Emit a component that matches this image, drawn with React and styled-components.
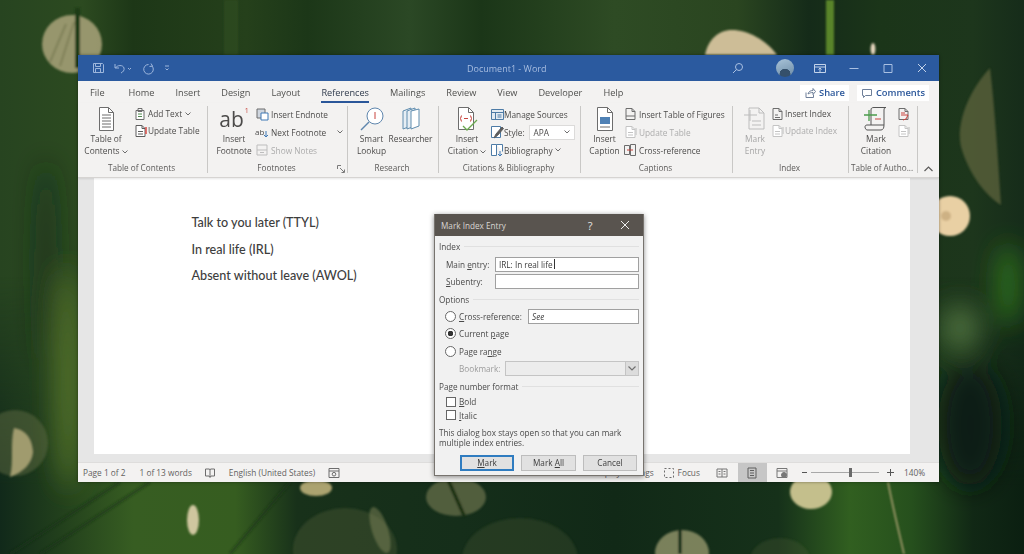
import React from 'react'
import styled, { createGlobalStyle } from 'styled-components'

const GlobalStyle = createGlobalStyle`
  html, body {
    margin: 0;
    padding: 0;
    width: 1024px;
    height: 554px;
    overflow: hidden;
    background: #12301a;
    font-family: "Open Sans", "Noto Sans", sans-serif;
  }
`

const Desktop = styled.div`
  position: relative;
  width: 1024px;
  height: 554px;
  overflow: hidden;
  filter: blur(0.35px);
`

const WallpaperSvg = styled.svg`
  position: absolute;
  inset: 0;
`

const Window = styled.div`
  position: absolute;
  left: 78px;
  top: 55px;
  width: 861px;
  height: 427px;
  display: flex;
  flex-direction: column;
  background: #f3f2f1;
  box-shadow: 0 0 3px rgba(0, 0, 0, 0.4);
`

const TitleBar = styled.div`
  position: relative;
  height: 26px;
  flex: none;
  display: flex;
  align-items: center;
  background: #2b5a9f;
  color: #fff;
`

const QuickAccess = styled.div`
  display: flex;
  align-items: center;
  gap: 8px;
  padding-left: 13px;
  color: #9db6dc;
`

const DocTitle = styled.div`
  position: absolute;
  left: 389px;
  font-size: 9px;
  color: #a7bde0;
`

const WindowControls = styled.div`
  margin-left: auto;
  display: flex;
  align-items: center;
  color: #a9c0e2;
`

const ControlSlot = styled.div`
  width: ${p => p.$w || 34}px;
  display: flex;
  justify-content: center;
  align-items: center;
`

const Avatar = styled.div`
  width: 18px;
  height: 18px;
  border-radius: 50%;
  background: radial-gradient(circle at 50% 85%, #35506b 0 30%, transparent 32%), linear-gradient(160deg, #a9c3d8, #6b8ba6);
`

const TabRow = styled.div`
  height: 22px;
  flex: none;
  display: flex;
  align-items: center;
  gap: 21px;
  padding: 1px 10px 0 12px;
  box-sizing: border-box;
`

const Tab = styled.div`
  position: relative;
  font-size: 9.2px;
  line-height: 21px;
  color: ${p => (p.$active ? '#2f3a4c' : '#50504e')};
  &:first-child {
    margin-right: 3px;
  }
  &::after {
    content: '';
    display: ${p => (p.$active ? 'block' : 'none')};
    position: absolute;
    left: 0;
    right: 0;
    bottom: 0;
    height: 2px;
    background: #2b579a;
  }
`

const TabActions = styled.div`
  margin-left: auto;
  display: flex;
  gap: 8px;
`

const TabAction = styled.div`
  height: 16px;
  width: ${p => p.$w}px;
  display: flex;
  align-items: center;
  justify-content: center;
  gap: 3px;
  background: #fff;
  color: #2b579a;
  font-size: 9.4px;
  font-weight: 600;
`

const Ribbon = styled.div`
  height: 74px;
  flex: none;
  display: flex;
  background: #f3f2f1;
  border-bottom: 1px solid #d6d4d2;
  box-shadow: 0 1px 2px rgba(0, 0, 0, 0.1);
  z-index: 1;
`

const RibbonGroup = styled.div`
  position: relative;
  width: ${p => p.$w}px;
  flex: none;
  display: flex;
  flex-direction: column;
  &::after {
    content: '';
    position: absolute;
    right: 0;
    top: 3px;
    bottom: 4px;
    width: 1px;
    background: #c9c8c6;
  }
`

const GroupBody = styled.div`
  height: 58px;
  display: flex;
  padding-left: ${p => p.$pad}px;
  gap: ${p => p.$gap ?? 4}px;
`

const GroupLabel = styled.div`
  height: 13px;
  line-height: 13px;
  text-align: center;
  font-size: 8.2px;
  color: #5c5b5a;
  white-space: nowrap;
  padding-right: 3px;
`

const DialogLauncher = styled.svg`
  position: absolute;
  right: 3px;
  bottom: 4px;
`

const CollapseSlot = styled.div`
  flex: 1;
  display: flex;
  align-items: flex-end;
  justify-content: center;
  padding-bottom: 5px;
  color: #5c5b5a;
`

const BigButton = styled.div`
  width: ${p => p.$w}px;
  flex: none;
  display: flex;
  flex-direction: column;
  align-items: center;
  padding-top: 3px;
  font-size: 8.4px;
  line-height: 12px;
  text-align: center;
  white-space: nowrap;
  color: ${p => (p.$off ? '#a6a6a6' : '#4c4b4a')};
`

const BigIcon = styled.div`
  height: 26px;
  margin-bottom: 1px;
  display: flex;
  align-items: center;
  justify-content: center;
`

const AbMark = styled.span`
  font-size: 21px;
  line-height: 26px;
  color: #4c4b4a;
`

const AbSup = styled.span`
  align-self: flex-start;
  margin-left: 1px;
  font-size: 7px;
  line-height: 9px;
  color: #c8453f;
`

const SmallStack = styled.div`
  display: flex;
  flex-direction: column;
  padding-top: 2px;
`

const SmallRow = styled.div`
  height: ${p => p.$h || 18}px;
  display: flex;
  align-items: center;
  gap: ${p => p.$gap ?? 2}px;
  font-size: 8.3px;
  white-space: nowrap;
  color: ${p => (p.$off ? '#acacac' : '#4c4b4a')};
`

const StyleCombo = styled.div`
  width: 46px;
  height: 15px;
  margin-left: 4px;
  display: flex;
  align-items: center;
  justify-content: space-between;
  padding: 0 4px;
  box-sizing: border-box;
  background: #fff;
  border: 1px solid #dcdbda;
`

const DocArea = styled.div`
  flex: 1;
  display: flex;
  justify-content: center;
  background: #e6e6e6;
  overflow: hidden;
`

const Page = styled.div`
  width: 816px;
  margin-right: 14px;
  height: 276px;
  padding: 32px 0 0 98px;
  box-sizing: border-box;
  background: #fff;
  font-family: Lato, "Open Sans", sans-serif;
  font-size: 12.6px;
  font-weight: 500;
  color: #3d3d3d;
`

const Para = styled.div`
  height: 26.5px;
  line-height: 26.5px;
`

const StatusBar = styled.div`
  height: 20px;
  flex: none;
  display: flex;
  align-items: center;
  padding-left: 5px;
  font-size: 8.3px;
  color: #62615f;
  background: #f3f2f1;
  white-space: nowrap;
  border-top: 1px solid #dedddc;
  box-sizing: border-box;
`

const StatusItem = styled.div`
  margin-left: ${p => p.$ml || 0}px;
  display: flex;
  align-items: center;
  gap: 3px;
`

const StatusRight = styled.div`
  margin-left: auto;
  height: 100%;
  display: flex;
  align-items: center;
  padding-right: 14px;
`

const ViewCell = styled.div`
  width: 29px;
  height: 100%;
  margin-left: ${p => p.$ml || 0}px;
  display: flex;
  align-items: center;
  justify-content: center;
  background: ${p => (p.$active ? '#c6c6c6' : 'transparent')};
`

const ZoomTrack = styled.div`
  position: relative;
  width: 68px;
  height: 1px;
  margin: 0 8px 0 3px;
  background: #a8a8a8;
`

const ZoomKnob = styled.div`
  position: absolute;
  left: 38px;
  top: -4px;
  width: 3px;
  height: 9px;
  background: #6a6a6a;
`

const Dialog = styled.div`
  position: absolute;
  left: 434px;
  top: 214px;
  width: 210px;
  height: 262px;
  display: flex;
  flex-direction: column;
  background: #f1f1f1;
  border: 1px solid #77736e;
  border-top: 0;
  box-sizing: border-box;
  box-shadow: 0 1px 5px rgba(0, 0, 0, 0.45);
  font-size: 8.2px;
  color: #4a4a4a;
`

const DialogTitle = styled.div`
  height: 22px;
  flex: none;
  display: flex;
  align-items: center;
  padding-left: 6px;
  background: #59544f;
  color: #d8d5d2;
  font-size: 8.2px;
`

const DialogTitleBtn = styled.div`
  width: ${p => p.$w}px;
  display: flex;
  justify-content: center;
  font-size: 11px;
  margin-left: ${p => (p.$auto ? 'auto' : '0')};
  color: #e6e4e2;
`

const DialogBody = styled.div`
  display: flex;
  flex-direction: column;
  padding: 0 4px;
  flex: 1;
`

const SectionHead = styled.div`
  height: ${p => p.$h}px;
  margin-top: ${p => p.$mt || 0}px;
  display: flex;
  align-items: center;
  gap: 4px;
  white-space: nowrap;
  &::after {
    content: '';
    flex: 1;
    height: 1px;
    background: #e0e0e0;
  }
`

const FormRow = styled.div`
  height: ${p => p.$h || 15}px;
  margin-top: ${p => p.$mt || 0}px;
  padding-left: ${p => p.$pl || 0}px;
  display: flex;
  align-items: center;
  white-space: nowrap;
  color: ${p => (p.$off ? '#9c9c9c' : 'inherit')};
`

const FieldLabel = styled.div`
  width: ${p => p.$w}px;
  flex: none;
`

const TextField = styled.div`
  flex: 1;
  height: 100%;
  padding: 0 3px;
  box-sizing: border-box;
  line-height: 13px;
  background: #fff;
  border: 1px solid #a0a0a0;
  font-style: ${p => (p.$italic ? 'italic' : 'normal')};
  color: #3c3c3c;
`

const Caret = styled.span`
  display: inline-block;
  width: 1px;
  height: 10px;
  margin-left: 1px;
  vertical-align: -1px;
  background: #333;
`

const SelectField = styled.div`
  flex: 1;
  height: 100%;
  display: flex;
  justify-content: flex-end;
  box-sizing: border-box;
  background: #ececec;
  border: 1px solid #c4c4c4;
`

const SelectArrow = styled.div`
  width: 12px;
  display: flex;
  align-items: center;
  justify-content: center;
  background: #dcdcdc;
  border-left: 1px solid #c4c4c4;
  color: #707070;
`

const Radio = styled.span`
  width: 11px;
  height: 11px;
  margin-right: 3px;
  flex: none;
  box-sizing: border-box;
  border-radius: 50%;
  background: ${p => (p.$on ? 'radial-gradient(circle, #333 0 2.6px, #fff 3px)' : '#fff')};
  border: 1px solid #666;
`

const CheckBox = styled.span`
  width: 10px;
  height: 10px;
  margin-right: 3px;
  flex: none;
  box-sizing: border-box;
  background: #fff;
  border: 1px solid #666;
`

const Note = styled.div`
  margin-top: 6px;
  line-height: 10px;
`

const ButtonRow = styled.div`
  margin-top: 7px;
  padding-left: 21px;
  display: flex;
  gap: 7px;
`

const DlgButton = styled.div`
  width: ${p => p.$w}px;
  height: 16px;
  line-height: 14px;
  text-align: center;
  box-sizing: border-box;
  background: #e1e1e1;
  border: 1px solid ${p => (p.$primary ? '#2f7cc0' : '#bdbdbd')};
  box-shadow: ${p => (p.$primary ? 'inset 0 0 0 1px #2f7cc0' : 'none')};
  color: #3c3c3c;
`

const Glyph = ({ w = 14, h = 14, children, stroke = '#6d6d6d', ...rest }) => (
  <svg width={w} height={h} viewBox={`0 0 ${w} ${h}`} fill="none" stroke={stroke} strokeWidth="1" {...rest}>
    {children}
  </svg>
)

const Chevron = ({ color = '#6d6d6d' }) => (
  <svg width="6" height="4" viewBox="0 0 6 4" fill="none" stroke={color} strokeWidth="1" style={{ marginLeft: 2 }}>
    <path d="M.5.5 3 3 5.5.5" />
  </svg>
)

const SmallDoc = ({ stroke = '#5c5c5c', mark }) => (
  <Glyph stroke={stroke}>
    <path d="M3 1.500h6l3 3v8H3z" fill="#fff" />
    <path d="M9 1.500v3h3M5 7.500h5M5 10h5" />
    {mark && <path d="M13 3v7" stroke={mark} strokeWidth="1.600" />}
  </Glyph>
)

const Wallpaper = () => (
  <WallpaperSvg width="1024" height="554" viewBox="0 0 1024 554">
    <defs>
      <linearGradient id="top" x1="0" x2="1" y1="0" y2="0">
        <stop offset="0" stopColor="#274420" />
        <stop offset=".08" stopColor="#2c4a20" />
        <stop offset=".13" stopColor="#1d3717" />
        <stop offset=".24" stopColor="#25401b" />
        <stop offset=".3" stopColor="#1c3718" />
        <stop offset=".4" stopColor="#2b4825" />
        <stop offset=".47" stopColor="#1b3618" />
        <stop offset=".6" stopColor="#2e4b24" />
        <stop offset=".72" stopColor="#2a4520" />
        <stop offset=".79" stopColor="#152b19" />
        <stop offset=".86" stopColor="#1b3519" />
        <stop offset=".95" stopColor="#1d361c" />
        <stop offset="1" stopColor="#162c1a" />
      </linearGradient>
      <linearGradient id="bottom" x1="0" x2="1" y1="0" y2="0">
        <stop offset="0" stopColor="#11291a" />
        <stop offset=".06" stopColor="#22401c" />
        <stop offset=".13" stopColor="#375d22" />
        <stop offset=".23" stopColor="#365d20" />
        <stop offset=".29" stopColor="#18311a" />
        <stop offset=".45" stopColor="#152e1a" />
        <stop offset=".6" stopColor="#112917" />
        <stop offset=".76" stopColor="#16311a" />
        <stop offset=".83" stopColor="#315f20" />
        <stop offset=".89" stopColor="#26501d" />
        <stop offset=".95" stopColor="#112815" />
        <stop offset="1" stopColor="#0b1f11" />
      </linearGradient>
      <linearGradient id="fade" x1="0" x2="0" y1="0" y2="1">
        <stop offset=".5" stopColor="#fff" stopOpacity="0" />
        <stop offset=".88" stopColor="#fff" stopOpacity="1" />
      </linearGradient>
      <mask id="fadeMask">
        <rect width="1024" height="554" fill="url(#fade)" />
      </mask>
      <filter id="soft" x="-20%" y="-20%" width="140%" height="140%"><feGaussianBlur stdDeviation="13" /></filter>
      <filter id="soft2" x="-5%" y="-5%" width="110%" height="110%"><feGaussianBlur stdDeviation="1.300" /></filter>
    </defs>
    <rect width="1024" height="554" fill="url(#top)" />
    <rect width="1024" height="554" fill="url(#bottom)" mask="url(#fadeMask)" />
    <g filter="url(#soft)">
      <ellipse cx="68" cy="380" rx="12" ry="110" fill="#56752a" />
      <ellipse cx="46" cy="260" rx="6" ry="100" fill="#12291a" />
      <ellipse cx="1008" cy="285" rx="10" ry="42" fill="#327d1e" />
      <ellipse cx="960" cy="328" rx="20" ry="24" fill="#4a6a3a" />
      <ellipse cx="970" cy="425" rx="32" ry="62" fill="#0a1f13" />
    </g>
    <g filter="url(#soft2)">
      <rect x="826" y="0" width="8" height="55" fill="#64932d" opacity=".85" />
      <rect x="224" y="0" width="14" height="55" fill="#3a5a23" opacity=".4" />
      <ellipse cx="72" cy="44" rx="30" ry="29" fill="#a39e76" opacity=".9" />
      <rect x="75" y="8" width="5" height="60" fill="#1e3a16" />
      <path d="M60 66 74 22M50 62 66 24" stroke="#7f8058" strokeWidth="2" />
      <path d="M705 55c3-15 13-25 27-25 16 0 34 10 45 25z" fill="#cdbd97" />
      <ellipse cx="873" cy="49" rx="2.400" ry="6" fill="#e8d8c0" />
      <path d="M990 68C965 95 955 130 962 150c8 25 23 45 39 55-3-45-6-95-11-137z" fill="#62663f" opacity=".7" />
      <circle cx="950" cy="216" r="20" fill="#e9d0a4" />
      <circle cx="946" cy="216" r="5" fill="#cdb184" />
      <ellipse cx="811" cy="492" rx="21" ry="17" fill="#c4bf8c" />
      <ellipse cx="316" cy="488" rx="16" ry="8" fill="#aba370" />
      <ellipse cx="456" cy="497" rx="30" ry="19" fill="#7a7f57" opacity=".6" />
      <rect x="446" y="480" width="4" height="40" fill="#1a3316" transform="rotate(-24 446 480)" />
      <ellipse cx="193" cy="520" rx="6" ry="15" fill="#cfc69f" />
      <ellipse cx="345" cy="550" rx="52" ry="42" fill="#5f6a42" opacity=".3" />
      <ellipse cx="380" cy="530" rx="8" ry="24" fill="#8b8e60" opacity=".45" transform="rotate(-18 380 530)" />
      <ellipse cx="520" cy="560" rx="58" ry="42" fill="#556238" opacity=".25" />
      <ellipse cx="682" cy="553" rx="27" ry="23" fill="#9d9d72" opacity=".75" />
      <rect x="678" y="530" width="4" height="24" fill="#15301a" />
      <ellipse cx="780" cy="560" rx="30" ry="22" fill="#556238" opacity=".25" />
      <circle cx="15" cy="443" r="33" fill="#5d6a42" opacity=".5" />
      <path d="M14 428c10 2 18 8 19 24-1 12-10 20-23 25 4-16 0-33 4-49z" fill="#a09b6e" />
      <path d="M888 482c4 22 11 50 16 72" stroke="#b7a87a" strokeWidth="1.400" fill="none" />
      <path d="M150 482 40 554M120 482 10 554M290 482 230 554" stroke="#1a3518" strokeWidth="3" opacity=".5" />
    </g>
  </WallpaperSvg>
)

const Tabs = ['File', 'Home', 'Insert', 'Design', 'Layout', 'References', 'Mailings', 'Review', 'View', 'Developer', 'Help']

const WordWindow = () => (
  <Window>
    <TitleBar>
      <QuickAccess>
        <Glyph stroke="#9db6dc"><path d="M2.500 2.500h9l1 1v8h-10zM4.500 2.500v3h5v-3M4.500 11.500v-4h5v4" /></Glyph>
        <Glyph stroke="#9db6dc" w={20}><path d="M2 3v4h4M2.500 7C4 4 10 3.500 11 7c.6 2.200-1 4-3 5" /><path d="M15 7l1.500 1.500L18 7" /></Glyph>
        <Glyph stroke="#9db6dc"><path d="M10 2.500l1.500 2.600-3 .4M11 5a4.800 4.800 0 1 1-3.500-1.500" /></Glyph>
        <Glyph stroke="#9db6dc" w={8}><path d="M2 5h4M2.500 7.500 4 9l1.500-1.500" /></Glyph>
      </QuickAccess>
      <DocTitle>Document1 - Word</DocTitle>
      <WindowControls>
        <ControlSlot $w={58}>
          <Glyph stroke="#a9c0e2"><circle cx="8" cy="6" r="3.500" /><path d="M5.500 8.500 2 12" /></Glyph>
        </ControlSlot>
        <ControlSlot $w={36}><Avatar /></ControlSlot>
        <ControlSlot><Glyph stroke="#c3d3ea"><path d="M1.500 3.500h11v8h-11zM1.500 6h11M7 11V7M5.500 8.500 7 7l1.500 1.500" /></Glyph></ControlSlot>
        <ControlSlot><Glyph stroke="#a9c0e2"><path d="M2.500 7.500h9" /></Glyph></ControlSlot>
        <ControlSlot><Glyph stroke="#a9c0e2"><path d="M3 3.500h8v8H3z" /></Glyph></ControlSlot>
        <ControlSlot><Glyph stroke="#c3d3ea"><path d="M3 3l8 8M11 3l-8 8" /></Glyph></ControlSlot>
      </WindowControls>
    </TitleBar>

    <TabRow>
      {Tabs.map(t => <Tab key={t} $active={t === 'References'}>{t}</Tab>)}
      <TabActions>
        <TabAction $w={49}>
          <Glyph w={12} h={12} stroke="#6e7f99"><path d="M2 5.500v5h7.500v-3M4 7c.5-2.500 2.500-3.500 5-3.500V1.500l2.500 3-2.500 3V5.500C7 5.500 5.500 6 4 7z" /></Glyph>
          Share
        </TabAction>
        <TabAction $w={72}>
          <Glyph w={12} h={12} stroke="#6e7f99"><path d="M1.500 2.500h9v6h-6l-2 2v-2h-1z" /></Glyph>
          Comments
        </TabAction>
      </TabActions>
    </TabRow>

    <Ribbon>
      <RibbonGroup $w={130}>
        <GroupBody $pad={6} $gap={5}>
          <BigButton $w={44}>
            <BigIcon>
              <Glyph w={20} h={26}><path d="M3.500 1.500h9l5 5v18h-14z" fill="#fff" /><path d="M12.500 1.500v5h5M6 9h9M6 12h9M6 15h9M6 18h9M6 21h9" /></Glyph>
            </BigIcon>
            Table of
            <span>Contents<Chevron /></span>
          </BigButton>
          <SmallStack>
            <SmallRow $gap={1} $h={17}><Glyph><path d="M3 3.500h8v9H3zM5 1.500h4v3H5z" fill="#fff" /><path d="M5 7h4M5 9.500h4" stroke="#4f8a4f" /></Glyph>Add Text<Chevron /></SmallRow>
            <SmallRow $gap={1} $h={17}><SmallDoc mark="#d9534f" />Update Table</SmallRow>
          </SmallStack>
        </GroupBody>
        <GroupLabel>Table of Contents</GroupLabel>
      </RibbonGroup>

      <RibbonGroup $w={140}>
        <GroupBody $pad={8} $gap={3}>
          <BigButton $w={36}>
            <BigIcon>
              <AbMark>ab</AbMark>
              <AbSup>1</AbSup>
            </BigIcon>
            Insert
            <span>Footnote</span>
          </BigButton>
          <SmallStack>
            <SmallRow><Glyph><path d="M2 2h8v9H2z" fill="#cfd6df" /><path d="M6 6h7v7H6z" fill="#fff" stroke="#3f79b5" /></Glyph>Insert Endnote</SmallRow>
            <SmallRow>
              <svg width="14" height="14" viewBox="0 0 14 14">
                <text x="0" y="10" fontFamily="Open Sans, sans-serif" fontSize="8" fill="#4c4b4a">ab</text>
                <path d="M11 6v6M9 10l2 2 2-2" stroke="#3f79b5" fill="none" />
              </svg>
              Next Footnote<span style={{ width: 5 }} /><Chevron />
            </SmallRow>
            <SmallRow $off><Glyph stroke="#bdbdbd"><path d="M2 2h10v10H2zM2 7h10M5 9.500h4" /></Glyph>Show Notes</SmallRow>
          </SmallStack>
        </GroupBody>
        <GroupLabel>Footnotes</GroupLabel>
        <DialogLauncher width="8" height="8" viewBox="0 0 8 8" fill="none" stroke="#7a7a7a">
          <path d="M.5 4V.5H4M3 3l4 4M4.500 7.500h3v-3" />
        </DialogLauncher>
      </RibbonGroup>

      <RibbonGroup $w={91}>
        <GroupBody $pad={9} $gap={5}>
          <BigButton $w={29}>
            <BigIcon>
              <Glyph w={26} h={26} stroke="#5f86ad"><circle cx="16" cy="10" r="8" fill="#fff" /><path d="M10 16 2 24" strokeWidth="1.500" /><path d="M16 6v7" stroke="#c8453f" /></Glyph>
            </BigIcon>
            Smart
            <span>Lookup</span>
          </BigButton>
          <BigButton $w={39}>
            <BigIcon>
              <Glyph w={22} h={26} stroke="#5f8cae"><path d="M3 5l8-3v18l-8 3z" fill="#e6eef4" /><path d="M7 5l8-3v18l-8 3z" fill="#e6eef4" /><path d="M11 5l8-2v17l-8 3z" fill="#fff" /></Glyph>
            </BigIcon>
            Researcher
          </BigButton>
        </GroupBody>
        <GroupLabel>Research</GroupLabel>
      </RibbonGroup>

      <RibbonGroup $w={142}>
        <GroupBody $pad={8} $gap={3}>
          <BigButton $w={40}>
            <BigIcon>
              <Glyph w={24} h={26}><path d="M3.500 1.500h10l5 5v17h-15z" fill="#fff" /><path d="M13.500 1.500v5h5" /><path d="M7 9.500c-1.500 0-.5 3-2 3 1.500 0 .5 3 2 3M15 9.500c1.500 0 .5 3 2 3-1.500 0-.5 3-2 3M9 12.500h4" stroke="#c8453f" /><path d="M8 20l4 4 10-10" stroke="#6aa84f" strokeWidth="1.300" /></Glyph>
            </BigIcon>
            Insert
            <span>Citation<Chevron /></span>
          </BigButton>
          <SmallStack>
            <SmallRow $gap={0}><Glyph stroke="#4d7ba6"><path d="M1.500 2.500h12v10h-12zM1.500 5.500h12M5.500 5.500v7" fill="#e4ebf2" /><path d="M7.500 8h4M7.500 10h4" /></Glyph>Manage Sources</SmallRow>
            <SmallRow $gap={0}>
              <Glyph stroke="#4d7ba6"><path d="M1.500 1.500h9v11h-9z" fill="#fff" /><path d="M4 13l2-4 6-7 1.500 1.500-6 7z" fill="#5c5c5c" stroke="#5c5c5c" /></Glyph>
              Style:
              <StyleCombo>APA<Chevron /></StyleCombo>
            </SmallRow>
            <SmallRow $gap={0}><Glyph stroke="#4d7ba6"><path d="M1.500 1.500h5v11h-5zM6.500 1.500h6v7" fill="#fff" /><path d="M10 8v5M8 11l2 2 2-2" stroke="#3f79b5" /></Glyph>Bibliography<Chevron /></SmallRow>
          </SmallStack>
        </GroupBody>
        <GroupLabel>Citations &amp; Bibliography</GroupLabel>
      </RibbonGroup>

      <RibbonGroup $w={152}>
        <GroupBody $pad={8} $gap={3}>
          <BigButton $w={31}>
            <BigIcon>
              <Glyph w={20} h={26}><path d="M2.500 1.500h10l5 5v18h-15z" fill="#fff" /><path d="M12.500 1.500v5h5" /><rect x="5" y="11" width="10" height="7" fill="#4f81b5" stroke="none" /><path d="M5 21h10" /></Glyph>
            </BigIcon>
            Insert
            <span>Caption</span>
          </BigButton>
          <SmallStack>
            <SmallRow><Glyph><path d="M3 1.500h6l3 3v8H3zM9 1.500v3h3M3 9h9" /></Glyph>Insert Table of Figures</SmallRow>
            <SmallRow $off><SmallDoc stroke="#c4c4c4" mark="#d0d0d0" />Update Table</SmallRow>
            <SmallRow><Glyph><path d="M1.500 2.500h5v9h-5zM7.500 1.500h5v11h-5z" /><path d="M4 7h6" stroke="#c8453f" /></Glyph>Cross-reference</SmallRow>
          </SmallStack>
        </GroupBody>
        <GroupLabel>Captions</GroupLabel>
      </RibbonGroup>

      <RibbonGroup $w={116}>
        <GroupBody $pad={7} $gap={0}>
          <BigButton $w={30} $off>
            <BigIcon>
              <Glyph w={24} h={26} stroke="#bdbdbd"><path d="M6 2h10l5 5v16H6zM16 2v5h5M9 15h9M9 19h9" /><path d="M1 9h13M7 4v11" /></Glyph>
            </BigIcon>
            Mark
            <span>Entry</span>
          </BigButton>
          <SmallStack>
            <SmallRow $gap={1} $h={17}><Glyph><path d="M3 1.500h6l3 3v8H3zM9 1.500v3h3M5 8h3M5 10.500h5" /></Glyph>Insert Index</SmallRow>
            <SmallRow $off $gap={1} $h={17}><SmallDoc stroke="#c4c4c4" mark="#d0d0d0" />Update Index</SmallRow>
          </SmallStack>
        </GroupBody>
        <GroupLabel>Index</GroupLabel>
      </RibbonGroup>

      <RibbonGroup $w={69}>
        <GroupBody $pad={8} $gap={1}>
          <BigButton $w={38}>
            <BigIcon>
              <Glyph w={26} h={26} stroke="#555"><path d="M8 4c0-2 1-2.500 3-2.500h12c-1.500 0-2 1-2 2.500v15H8z" /><path d="M8 19H4c-1.500 0-2 1-2 2s1 3 2 3h14c2 0 3-2 3-5" /><path d="M1 9h13M6 4v11" stroke="#4b9b4b" strokeWidth="1.300" /><path d="M12 13h6" stroke="#c8453f" /></Glyph>
            </BigIcon>
            Mark
            <span>Citation</span>
          </BigButton>
          <SmallStack>
            <SmallRow $h={17}><Glyph><path d="M3 1.500h6l3 3v8H3zM9 1.500v3h3" /><path d="M5 6h4M5 8h7l-2 4-3 1" stroke="#c8453f" /></Glyph></SmallRow>
            <SmallRow $off $h={17}><SmallDoc stroke="#c4c4c4" mark="#d0d0d0" /></SmallRow>
          </SmallStack>
        </GroupBody>
        <GroupLabel>Table of Autho...</GroupLabel>
      </RibbonGroup>

      <CollapseSlot>
        <svg width="9" height="6" viewBox="0 0 9 6" fill="none" stroke="currentColor" strokeWidth="1.200"><path d="M.5 5 4.500 1l4 4" /></svg>
      </CollapseSlot>
    </Ribbon>

    <DocArea>
      <Page>
        <Para>Talk to you later (TTYL)</Para>
        <Para>In real life (IRL)</Para>
        <Para>Absent without leave (AWOL)</Para>
      </Page>
    </DocArea>

    <StatusBar>
      <StatusItem>Page 1 of 2</StatusItem>
      <StatusItem $ml={14}>1 of 13 words</StatusItem>
      <StatusItem $ml={12}>
        <Glyph w={12} h={12}><path d="M1.500 2h4l.5 1 .5-1h4v7H7l-1 1.500L5 9H1.500zM6 3v7" /></Glyph>
      </StatusItem>
      <StatusItem $ml={13}>English (United States)</StatusItem>
      <StatusItem $ml={13}>
        <Glyph w={12} h={12}><path d="M1 1.500h10v9H1zM1 4h10" /><circle cx="6" cy="7.200" r="1.800" /></Glyph>
      </StatusItem>
      <StatusRight>
        <StatusItem>Display Settings</StatusItem>
        <StatusItem $ml={9}>
          <Glyph w={12} h={12} strokeDasharray="2 2"><path d="M1.500 1.500h9v9h-9z" /></Glyph>
          Focus
        </StatusItem>
        <ViewCell $ml={8}>
          <Glyph w={12} h={12} stroke="#777"><path d="M1 2h10v8H1zM6 2v8M2.500 4.500h2M7.500 4.500h2M2.500 7h2M7.500 7h2" /></Glyph>
        </ViewCell>
        <ViewCell $ml={1} $active>
          <Glyph w={12} h={12} stroke="#5f5f5f"><path d="M2 1h8v10H2zM4 3.500h4M4 6h4M4 8.500h4" /></Glyph>
        </ViewCell>
        <ViewCell $ml={1}>
          <Glyph w={12} h={12} stroke="#777"><path d="M1 1.500h10v9H1zM1 4h10" /><circle cx="8" cy="8" r="2.500" fill="#777" /></Glyph>
        </ViewCell>
        <StatusItem $ml={4}>
          <Glyph w={7} h={7} stroke="#555"><path d="M1 3.500h5" /></Glyph>
        </StatusItem>
        <ZoomTrack><ZoomKnob /></ZoomTrack>
        <Glyph w={7} h={7} stroke="#555"><path d="M0 3.500h7M3.500 0v7" /></Glyph>
        <StatusItem $ml={10}>140%</StatusItem>
      </StatusRight>
    </StatusBar>
  </Window>
)

const MarkIndexDialog = () => (
  <Dialog>
    <DialogTitle>
      Mark Index Entry
      <DialogTitleBtn $w={34} $auto>?</DialogTitleBtn>
      <DialogTitleBtn $w={36}>
        <Glyph w={10} h={10} stroke="#eee"><path d="M1 1l8 8M9 1 1 9" /></Glyph>
      </DialogTitleBtn>
    </DialogTitle>
    <DialogBody>
      <SectionHead $h={21}>Index</SectionHead>
      <FormRow $pl={7}>
        <FieldLabel $w={49}>Main <u>e</u>ntry:</FieldLabel>
        <TextField>IRL: In real life<Caret /></TextField>
      </FormRow>
      <FormRow $pl={7} $mt={2}>
        <FieldLabel $w={49}><u>S</u>ubentry:</FieldLabel>
        <TextField />
      </FormRow>
      <SectionHead $h={20}>Options</SectionHead>
      <FormRow $pl={6}>
        <Radio />
        <FieldLabel $w={69}><u>C</u>ross-reference:</FieldLabel>
        <TextField $italic>See</TextField>
      </FormRow>
      <FormRow $pl={6} $h={18}><Radio $on /><span>Current <u>p</u>age</span></FormRow>
      <FormRow $pl={6} $h={18}><Radio /><span>Page ra<u>n</u>ge</span></FormRow>
      <FormRow $pl={20} $mt={1} $off>
        <FieldLabel $w={46}>Bookmark:</FieldLabel>
        <SelectField>
          <SelectArrow>
            <svg width="8" height="5" viewBox="0 0 8 5" fill="none" stroke="currentColor" strokeWidth="1.200"><path d="M.5.5 4 4 7.500.5" /></svg>
          </SelectArrow>
        </SelectField>
      </FormRow>
      <SectionHead $h={18} $mt={1}>Page number format</SectionHead>
      <FormRow $pl={7} $h={13}><CheckBox /><span><u>B</u>old</span></FormRow>
      <FormRow $pl={7} $h={14}><CheckBox /><span><u>I</u>talic</span></FormRow>
      <Note>This dialog box stays open so that you can mark<br />multiple index entries.</Note>
      <ButtonRow>
        <DlgButton $w={54} $primary><u>M</u>ark</DlgButton>
        <DlgButton $w={55}>Mark <u>A</u>ll</DlgButton>
        <DlgButton $w={54}>Cancel</DlgButton>
      </ButtonRow>
    </DialogBody>
  </Dialog>
)

export default function App() {
  return (
    <Desktop>
      <GlobalStyle />
      <Wallpaper />
      <WordWindow />
      <MarkIndexDialog />
    </Desktop>
  )
}
